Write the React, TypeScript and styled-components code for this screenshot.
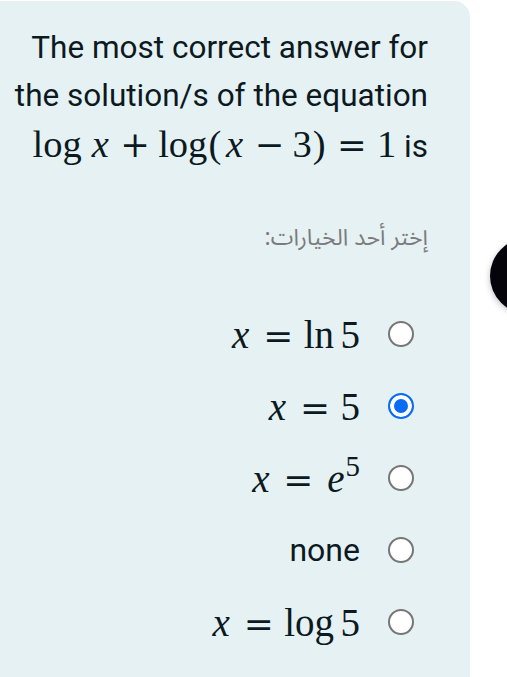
import React from "react";
import styled, { createGlobalStyle } from "styled-components";

const Global = createGlobalStyle`
  html, body { margin: 0; padding: 0; background: #ffffff; overflow: hidden; }
  #root { width: 507px; height: 677px; position: relative; overflow: hidden; }
`;

const Page = styled.div`
  width: 507px;
  height: 677px;
  position: relative;
  overflow: hidden;
  background: #ffffff;
`;

const Card = styled.div`
  margin-top: 1px;
  width: 470px;
  min-height: 700px;
  box-sizing: border-box;
  background: #e6f1f4;
  border-radius: 0 16px 0 0;
  padding: 23px 42px 0 8px;
  display: flex;
  flex-direction: column;
`;

const Question = styled.p`
  margin: 0;
  direction: ltr;
  text-align: right;
  font-family: Roboto, "Noto Sans", sans-serif;
  font-size: 31.5px;
  line-height: 48px;
  color: #0c1a1f;
`;

const Math = styled.span`
  font-family: "Liberation Serif", "DejaVu Serif", serif;
  font-size: 38.5px;
  line-height: 48px;
  white-space: nowrap;
`;

const Var = styled.span<{ $tight?: boolean }>`
  font-style: italic;
  margin: 0 ${(p) => (p.$tight ? "0.01em" : "0.09em")} 0 0.09em;
`;

const Space = styled.span`
  margin-left: 0.167em;
`;

const Op = styled.span<{ $space: number }>`
  font-family: "DejaVu Serif", serif;
  font-size: 0.92em;
  margin: 0 ${(p) => p.$space}em;
`;

const Paren = styled.span`
  margin: 0 0.03em;
`;

const Sup = styled.sup`
  font-size: 0.74em;
  vertical-align: 0;
  position: relative;
  top: -0.55em;
  margin-left: 0.02em;
`;

const Prompt = styled.div`
  direction: rtl;
  text-align: right;
  margin-top: 50px;
  font-family: "Noto Sans Arabic", "DejaVu Sans", sans-serif;
  font-size: 23px;
  line-height: 34px;
  color: #7b7b7b;
`;

const Options = styled.div`
  margin-top: 43px;
  display: flex;
  flex-direction: column;
  padding-right: 14px;
`;

const Row = styled.label`
  height: 72px;
  display: flex;
  flex-direction: row-reverse;
  align-items: center;
  gap: 28px;
  color: #0c1a1f;
`;

const Radio = styled.span<{ $checked?: boolean }>`
  flex: none;
  width: 26px;
  height: 26px;
  box-sizing: border-box;
  border-radius: 50%;
  border: 2px solid ${(p) => (p.$checked ? "#0a6cf5" : "#767676")};
  background: ${(p) => (p.$checked ? "#0a6cf5" : "#ffffff")};
  box-shadow: ${(p) => (p.$checked ? "inset 0 0 0 4px #ffffff" : "none")};
`;

const OptMath = styled.span`
  font-family: "Liberation Serif", "DejaVu Serif", serif;
  font-size: 39px;
  line-height: 1;
  white-space: nowrap;
`;

const OptText = styled.span`
  font-family: Roboto, "Noto Sans", sans-serif;
  font-size: 32px;
  line-height: 1;
`;

const Fab = styled.div`
  position: absolute;
  left: 490px;
  top: 238px;
  width: 76px;
  height: 76px;
  border-radius: 50%;
  background: #05040a;
  box-shadow: 0 2px 6px rgba(0, 0, 0, 0.25);
`;

const Bin = ({ children }: { children: React.ReactNode }) => <Op $space={0.23}>{children}</Op>;
const Eq = () => <Op $space={0.29}>=</Op>;

export default function App() {
  return (
    <Page>
      <Global />
      <Card>
        <Question>
          The most correct answer for the solution/s of the equation{" "}
          <Math>
            log
            <Space />
            <Var>x</Var>
            <Bin>+</Bin>
            log<Paren>(</Paren>
            <Var>x</Var>
            <Bin>−</Bin>3<Paren>)</Paren>
            <Eq />1
          </Math>{" "}
          is
        </Question>
        <Prompt>إختر أحد الخيارات:</Prompt>
        <Options>
          <Row>
            <Radio />
            <OptMath>
              <Var>x</Var>
              <Eq />
              ln
              <Space />5
            </OptMath>
          </Row>
          <Row>
            <Radio $checked />
            <OptMath>
              <Var>x</Var>
              <Eq />5
            </OptMath>
          </Row>
          <Row>
            <Radio />
            <OptMath>
              <Var>x</Var>
              <Eq />
              <Var $tight>e</Var>
              <Sup>5</Sup>
            </OptMath>
          </Row>
          <Row>
            <Radio />
            <OptText>none</OptText>
          </Row>
          <Row>
            <Radio />
            <OptMath>
              <Var>x</Var>
              <Eq />
              log
              <Space />5
            </OptMath>
          </Row>
        </Options>
      </Card>
      <Fab />
    </Page>
  );
}
